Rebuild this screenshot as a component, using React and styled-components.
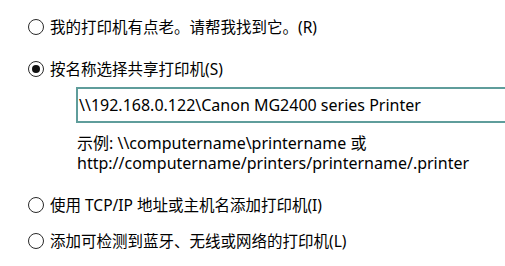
import React from "react";
import styled, { createGlobalStyle } from "styled-components";

const Global = createGlobalStyle`
  html, body { margin: 0; padding: 0; background: #fff; }
  body {
    font-family: "Noto Sans", "Noto Sans CJK SC", sans-serif;
    color: #000;
    overflow: hidden;
  }
`;

const Page = styled.div`
  width: 505px;
  height: 266px;
  box-sizing: border-box;
  padding: 16px 0 0 28px;
  display: flex;
  flex-direction: column;
  overflow: hidden;
`;

const Option = styled.label`
  display: flex;
  align-items: center;
  gap: 6px;
  height: 22px;
  font-size: 15.5px;
  line-height: 22px;
  white-space: nowrap;
  margin-top: ${(p) => p.$mt || 0}px;
`;

const Radio = styled.span`
  width: 16px;
  height: 16px;
  box-sizing: border-box;
  border: 1.2px solid #2a2a2a;
  border-radius: 50%;
  display: flex;
  align-items: center;
  justify-content: center;
  flex: none;
  &::after {
    content: "";
    width: 8px;
    height: 8px;
    border-radius: 50%;
    background: #111;
    display: ${(p) => (p.$checked ? "block" : "none")};
  }
`;

const Indent = styled.div`
  margin-left: 48px;
  display: flex;
  flex-direction: column;
`;

const Field = styled.div`
  margin-top: 7px;
  height: 36px;
  box-sizing: border-box;
  border: 2px solid #5f9d9b;
  border-right: none;
  margin-right: -10px;
  padding-left: 1px;
  display: flex;
  align-items: center;
  font-size: 16px;
  white-space: nowrap;
`;

const Hint = styled.div`
  margin-top: 10px;
  font-size: 16px;
  line-height: 20px;
  white-space: nowrap;
  padding-left: 1px;
`;

export default function App() {
  return (
    <>
      <Global />
      <Page>
        <Option>
          <Radio />
          我的打印机有点老。请帮我找到它。(R)
        </Option>
        <Option $mt={20}>
          <Radio $checked />
          按名称选择共享打印机(S)
        </Option>
        <Indent>
          <Field>\\192.168.0.122\Canon MG2400 series Printer</Field>
          <Hint>
            示例: \\computername\printername 或
            <br />
            http://computername/printers/printername/.printer
          </Hint>
        </Indent>
        <Option $mt={21}>
          <Radio />
          使用 TCP/IP 地址或主机名添加打印机(I)
        </Option>
        <Option $mt={14}>
          <Radio />
          添加可检测到蓝牙、无线或网络的打印机(L)
        </Option>
      </Page>
    </>
  );
}
